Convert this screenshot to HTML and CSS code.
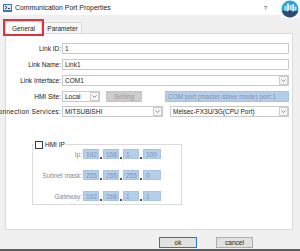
FILE: index.html
```html
<!DOCTYPE html>
<html>
<head>
<meta charset="utf-8">
<link rel="stylesheet" href="styles.css">
</head>
<body>
<div class="titlebar">
  <svg class="app-icon" viewBox="0 0 9 8"><rect x="0" y="0" width="9" height="8" fill="#3f78b0"/><rect x="1" y="1" width="7" height="5" fill="#dbe7f3"/><path d="M2 2 L4 3.5 L2 5" stroke="#2b3f58" stroke-width="1" fill="none"/><rect x="5" y="4" width="2" height="1" fill="#2b3f58"/></svg>
  <span class="title">Communication Port Properties</span>
  <span class="help">?</span>
  <svg class="logo" viewBox="0 0 18 18">
    <defs><clipPath id="c"><circle cx="9" cy="9" r="8.5"/></clipPath></defs>
    <rect width="18" height="18" fill="#fff"/>
    <g clip-path="url(#c)">
      <rect width="18" height="18" fill="#2aa3dd"/>
      <rect x="3.5" y="6" width="2" height="7" fill="#bfe3f6"/>
      <rect x="6" y="3.5" width="2" height="9" fill="#d6eefa"/>
      <rect x="8.5" y="5" width="2.2" height="8" fill="#bfe3f6"/>
      <rect x="11.2" y="4" width="1.8" height="9" fill="#d6eefa"/>
      <rect x="13.4" y="6.5" width="2" height="7" fill="#bfe3f6"/>
      <path d="M0 11 L4 10.5 L6 11.5 L9 10 L12 11.5 L15 10.5 L18 11 L18 18 L0 18 Z" fill="#2f4d6e"/>
    </g>
  </svg>
</div>
<div class="main">
  <div class="tabs">
    <div class="tab active">General</div>
    <div class="tab">Parameter</div>
  </div>
  <div class="panel">
    <div class="form">
      <div class="row"><span class="lbl">Link ID:</span><div class="input">1</div></div>
      <div class="row"><span class="lbl">Link Name:</span><div class="input">Link1</div></div>
      <div class="row"><span class="lbl">Link Interface:</span><div class="input select"><span class="val">COM1</span><span class="arrow"><svg viewBox="0 0 5 3"><path d="M0.5 0.5 L2.5 2.5 L4.5 0.5" stroke="#777" stroke-width="0.8" fill="none"/></svg></span></div></div>
      <div class="row"><span class="lbl">HMI Site:</span><div class="input select local"><span class="val">Local</span><span class="arrow"><svg viewBox="0 0 5 3"><path d="M0.5 0.5 L2.5 2.5 L4.5 0.5" stroke="#777" stroke-width="0.8" fill="none"/></svg></span></div><button class="setting">Setting</button><div class="input comport">COM port (master-slave mode) port:1</div></div>
      <div class="row last"><span class="lbl wide-lbl">Connection Services:</span><div class="input select mit"><span class="val">MITSUBISHI</span><span class="arrow"><svg viewBox="0 0 5 3"><path d="M0.5 0.5 L2.5 2.5 L4.5 0.5" stroke="#777" stroke-width="0.8" fill="none"/></svg></span></div><div class="input select melsec"><span class="val">Melsec-FX3U/3G(CPU Port)</span><span class="arrow"><svg viewBox="0 0 5 3"><path d="M0.5 0.5 L2.5 2.5 L4.5 0.5" stroke="#777" stroke-width="0.8" fill="none"/></svg></span></div></div>
    </div>
    <fieldset class="group">
      <legend><span class="check"></span>HMI IP</legend>
      <div class="iprow"><span class="iplbl">Ip:</span><span class="ipf">192</span><span class="dot"></span><span class="ipf">168</span><span class="dot"></span><span class="ipf">1</span><span class="dot"></span><span class="ipf wide">100</span></div>
      <div class="iprow"><span class="iplbl">Subnet mask:</span><span class="ipf">255</span><span class="dot"></span><span class="ipf">255</span><span class="dot"></span><span class="ipf">255</span><span class="dot"></span><span class="ipf wide">0</span></div>
      <div class="iprow"><span class="iplbl">Gateway:</span><span class="ipf">192</span><span class="dot"></span><span class="ipf">168</span><span class="dot"></span><span class="ipf">1</span><span class="dot"></span><span class="ipf wide">1</span></div>
    </fieldset>
  </div>
  <div class="footer">
    <button class="btn ok">ok</button>
    <button class="btn cancel">cancel</button>
  </div>
</div>
<div class="bottomline"></div>
</body>
</html>
```
FILE: styles.css
```css
html, body { margin: 0; padding: 0; }
body {
  width: 300px;
  height: 251px;
  overflow: hidden;
  background: #f0f0f0;
  font-family: "Liberation Sans", Arial, sans-serif;
  font-size: 6.5px;
  color: #1e1e1e;
}
.titlebar {
  height: 15px;
  background: #fff;
  display: flex;
  align-items: center;
}
.app-icon { width: 9px; height: 8px; margin: 0 3px 0 3px; flex: none; }
.title { flex: 1; font-size: 6.9px; color: #222; white-space: nowrap; }
.help { font-size: 6px; color: #555; margin-right: 14px; }
.logo { width: 18px; height: 18px; align-self: flex-start; margin-right: 1px; flex: none; }

.main { padding: 0 7px 0 5px; }
.tabs {
  height: 18px;
  display: flex;
  align-items: flex-end;
}
.tab {
  box-sizing: border-box;
  height: 11px;
  width: 39px;
  margin-left: 1px;
  border: 1px solid #d9d9d9;
  border-bottom: none;
  background: #f7f7f7;
  display: flex;
  align-items: center;
  justify-content: center;
  color: #222;
}
.tab.active {
  position: relative;
  z-index: 1;
  width: 37px;
  height: 13px;
  margin-left: 0;
  margin-bottom: -1px;
  background: #fff;
  outline: 2px solid #e3323b;
}
.panel {
  box-sizing: border-box;
  height: 197px;
  border: 1px solid #dadada;
  background: #fff;
}
.form { padding: 9px 3px 0 0; }
.row {
  display: flex;
  align-items: center;
  height: 11px;
  margin-bottom: 5px;
}
.row.last { margin-top: -1px; }
.lbl {
  width: 55px;
  flex: none;
  margin-right: 1px;
  display: flex;
  justify-content: flex-end;
  white-space: nowrap;
  color: #222;
}
.wide-lbl { letter-spacing: 0.3px; }
.input {
  box-sizing: border-box;
  flex: 1;
  height: 11px;
  border: 1px solid #c9c9c9;
  background: #fff;
  padding-left: 2px;
  display: flex;
  align-items: center;
  white-space: nowrap;
  color: #1e1e1e;
}
.select { padding-right: 0; }
.select .val { flex: 1; }
.arrow {
  box-sizing: border-box;
  width: 9px;
  height: 9px;
  border: 1px solid #cfcfcf;
  background: #f5f5f5;
  display: flex;
  align-items: center;
  justify-content: center;
}
.arrow svg { width: 5px; height: 3px; }
.local { flex: none; width: 38px; }
.setting {
  box-sizing: border-box;
  width: 36px;
  height: 11px;
  margin-left: 6px;
  padding: 0;
  border: 1px solid #c4c4c4;
  background: #cccccc;
  color: #9c9c9c;
  font-family: inherit;
  font-size: 6.5px;
}
.comport {
  margin-left: 23px;
  background: #b5cde9;
  border-color: #a9c3e2;
  color: #8196b1;
}
.mit { flex: none; width: 101px; }
.melsec { margin-left: 7px; }

.group {
  box-sizing: border-box;
  width: 150px;
  margin: 23px 0 0 26px;
  padding: 0 0 3px 0;
  border: 1px solid #dcdcdc;
}
.group legend {
  padding: 0 1px;
  margin-left: 1px;
  display: flex;
  align-items: center;
  height: 9px;
  color: #222;
}
.check {
  box-sizing: border-box;
  width: 8px;
  height: 8px;
  border: 1px solid #3c3c3c;
  background: #fff;
  margin-right: 2px;
}
.iprow {
  display: flex;
  align-items: center;
  height: 10px;
  margin-top: 11px;
}
.iprow:first-of-type { margin-top: 0; }
.iplbl {
  width: 49px;
  margin-right: 1px;
  text-align: right;
  color: #8a8a8a;
  white-space: nowrap;
}
.ipf {
  box-sizing: border-box;
  width: 16px;
  height: 10px;
  background: #b5cee9;
  border: 1px solid #a9c3e2;
  color: #7e93ae;
  padding-left: 2px;
  display: flex;
  align-items: center;
}
.ipf.wide { width: 18px; }
.dot {
  width: 4px;
  height: 10px;
  display: flex;
  justify-content: center;
  align-items: flex-end;
}
.dot::after {
  content: "";
  width: 2px;
  height: 2px;
  background: #505050;
}
.footer {
  height: 19px;
  box-sizing: border-box;
  padding: 7px 40px 0 0;
  display: flex;
  justify-content: flex-end;
  align-items: flex-start;
}
.btn {
  box-sizing: border-box;
  height: 11px;
  padding: 0;
  background: #e1e1e1;
  border: 1px solid #adadad;
  font-family: inherit;
  font-size: 6.5px;
  color: #222;
}
.ok { width: 38px; border-color: #1e7bd4; margin-right: 19px; }
.cancel { width: 37px; }
.bottomline { height: 2px; background: #5c5c5c; }
```
